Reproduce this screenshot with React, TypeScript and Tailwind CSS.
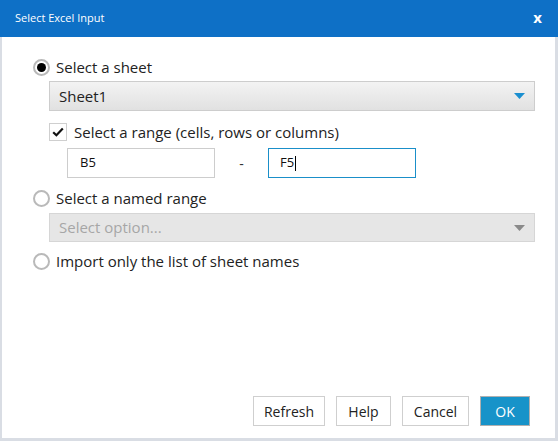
import React from 'react';

function Radio({ checked, label }: { checked?: boolean; label: string }) {
  return (
    <div className="flex items-center h-[22px]">
      <span className="w-[17px] h-[17px] ml-[31px] rounded-full border-2 border-[#b9b9b9] bg-white flex items-center justify-center shrink-0">
        {checked && <span className="w-[9px] h-[9px] rounded-full bg-black" />}
      </span>
      <span className="ml-[6px] text-[15px] text-[#222]">{label}</span>
    </div>
  );
}

function Caret({ color }: { color: string }) {
  return (
    <svg width="11" height="6" viewBox="0 0 11 6">
      <path d="M0 0 L11 0 L5.5 6 Z" fill={color} />
    </svg>
  );
}

export default function App() {
  return (
    <div
      className="w-[558px] h-[441px] bg-white flex flex-col border-l-2 border-r-[3px] border-b-[3px] border-[#d9dde4] relative"
      style={{ fontFamily: '"Open Sans", "Noto Sans", sans-serif' }}
    >
      <div className="h-[37px] -ml-[2px] -mr-[3px] bg-[#0e70c6] flex items-center justify-between pl-[15px] pr-[16px] shrink-0">
        <span className="text-[11px] text-white">Select Excel Input</span>
        <span className="text-white text-[15px] font-bold leading-none pb-[2px]">x</span>
      </div>

      <div className="flex flex-col pt-[19px]">
        <Radio checked label="Select a sheet" />

        <div className="ml-[47px] mr-[20px] mt-[3px] h-[30px] border border-[#cdcdcd] bg-gradient-to-b from-[#f3f3f3] to-[#e1e1e1] flex items-center justify-between pl-[9px] pr-[9px]">
          <span className="text-[15px] text-[#222]">Sheet1</span>
          <Caret color="#1a8fd0" />
        </div>

        <div className="flex items-center ml-[47px] mt-[12px] h-[18px]">
          <span className="w-[18px] h-[18px] border border-[#cfcfcf] bg-white flex items-center justify-center shrink-0">
            <svg width="12" height="10" viewBox="0 0 12 10">
              <path d="M1.2 5.2 L4.4 8.2 L10.8 1.6" stroke="#111" strokeWidth="2.2" fill="none" />
            </svg>
          </span>
          <span className="ml-[7px] text-[15px] text-[#222]">Select a range (cells, rows or columns)</span>
        </div>

        <div className="flex items-center ml-[65px] mt-[7px]">
          <div className="w-[148px] h-[30px] border border-[#cdcdcd] flex items-center pl-[12px] text-[13px] text-[#111]">B5</div>
          <span className="w-[53px] text-center text-[14px] text-[#333]">-</span>
          <div className="w-[148px] h-[30px] border border-[#1a8fc9] flex items-center pl-[11px] text-[13px] text-[#111]">
            F5<span className="w-px h-[15px] bg-black ml-px" />
          </div>
        </div>

        <div className="mt-[9px]">
          <Radio label="Select a named range" />
        </div>

        <div className="ml-[47px] mr-[20px] mt-[4px] h-[29px] border border-[#d6d6d6] bg-[#e6e6e6] flex items-center justify-between pl-[9px] pr-[9px]">
          <span className="text-[15px] text-[#a6a6a6]">Select option...</span>
          <Caret color="#8a8a8a" />
        </div>

        <div className="mt-[8px]">
          <Radio label="Import only the list of sheet names" />
        </div>
      </div>

      <div className="mt-auto mb-[12px] flex justify-end gap-[11px] pr-[25px]">
        <button className="h-[30px] w-[72px] border border-[#cfcfcf] bg-white text-[14px] text-[#222]">Refresh</button>
        <button className="h-[30px] w-[55px] border border-[#cfcfcf] bg-white text-[14px] text-[#222]">Help</button>
        <button className="h-[30px] w-[67px] border border-[#cfcfcf] bg-white text-[14px] text-[#222]">Cancel</button>
        <button className="h-[30px] w-[50px] border border-[#b0b0b0] bg-[#1793c9] text-[14px] text-white">OK</button>
      </div>
    </div>
  );
}
